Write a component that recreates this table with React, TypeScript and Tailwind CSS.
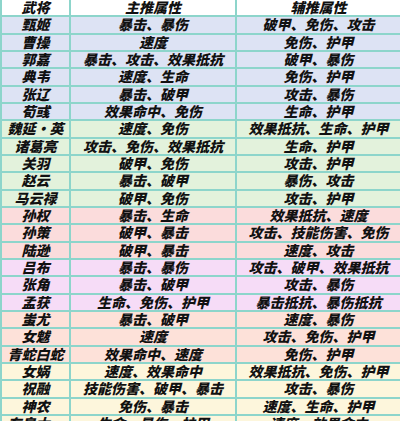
const rows: { name: string; main: string; sub: string; bg: string }[] = [
  { name: '甄姬', main: '暴击、暴伤', sub: '破甲、免伤、攻击', bg: 'bg-[#dde3f4]' },
  { name: '曹操', main: '速度', sub: '免伤、护甲', bg: 'bg-[#dde3f4]' },
  { name: '郭嘉', main: '暴击、攻击、效果抵抗', sub: '破甲、暴伤', bg: 'bg-[#dde3f4]' },
  { name: '典韦', main: '速度、生命', sub: '免伤、护甲', bg: 'bg-[#dde3f4]' },
  { name: '张辽', main: '暴击、破甲', sub: '攻击、暴伤', bg: 'bg-[#dde3f4]' },
  { name: '荀彧', main: '效果命中、免伤', sub: '生命、护甲', bg: 'bg-[#dde3f4]' },
  { name: '魏延·英', main: '速度、免伤', sub: '效果抵抗、生命、护甲', bg: 'bg-[#e3f2dc]' },
  { name: '诸葛亮', main: '攻击、免伤、效果抵抗', sub: '生命、护甲', bg: 'bg-[#e3f2dc]' },
  { name: '关羽', main: '破甲、免伤', sub: '攻击、护甲', bg: 'bg-[#e3f2dc]' },
  { name: '赵云', main: '暴击、破甲', sub: '暴伤、攻击', bg: 'bg-[#e3f2dc]' },
  { name: '马云禄', main: '破甲、免伤', sub: '攻击、护甲', bg: 'bg-[#e3f2dc]' },
  { name: '孙权', main: '暴击、生命', sub: '效果抵抗、速度', bg: 'bg-[#fbdcdc]' },
  { name: '孙策', main: '破甲、暴击', sub: '攻击、技能伤害、免伤', bg: 'bg-[#fbdcdc]' },
  { name: '陆逊', main: '破甲、暴击', sub: '速度、攻击', bg: 'bg-[#fbdcdc]' },
  { name: '吕布', main: '暴击、暴伤', sub: '攻击、破甲、效果抵抗', bg: 'bg-[#f6dcf7]' },
  { name: '张角', main: '暴击、破甲', sub: '攻击、暴伤', bg: 'bg-[#f6dcf7]' },
  { name: '孟获', main: '生命、免伤、护甲', sub: '暴击抵抗、暴伤抵抗', bg: 'bg-[#f6dcf7]' },
  { name: '蚩尤', main: '暴击、破甲', sub: '速度、暴伤', bg: 'bg-[#fde1d9]' },
  { name: '女魃', main: '速度', sub: '攻击、免伤、护甲', bg: 'bg-[#fde1d9]' },
  { name: '青蛇白蛇', main: '效果命中、速度', sub: '免伤、护甲', bg: 'bg-[#fde1d9]' },
  { name: '女娲', main: '速度、效果命中', sub: '效果抵抗、免伤、护甲', bg: 'bg-[#fdf6dc]' },
  { name: '祝融', main: '技能伤害、破甲、暴击', sub: '攻击、暴伤', bg: 'bg-[#fdf6dc]' },
  { name: '神农', main: '免伤、暴击', sub: '速度、生命、护甲', bg: 'bg-[#fdf6dc]' },
  { name: '东皇太一', main: '生命、暴伤、护甲', sub: '速度、效果命中', bg: 'bg-[#fdf6dc]' },
];

const Row = ({ name, main, sub, bg }: { name: string; main: string; sub: string; bg: string }) => (
  <div className={`grid grid-cols-[69px_166px_1fr] h-[17.33px] border-b-2 border-[#8dd5cb] ${bg}`}>
    <div className="flex items-center justify-center border-r-2 border-[#8dd5cb] whitespace-nowrap">{name}</div>
    <div className="flex items-center justify-center border-r-2 border-[#8dd5cb] whitespace-nowrap">{main}</div>
    <div className="flex items-center justify-center whitespace-nowrap">{sub}</div>
  </div>
);

export default function App() {
  return (
    <div
      className="w-[400px] h-[421px] overflow-hidden bg-white border-l-2 border-[#8dd5cb] text-[14px] leading-[15px] font-black italic text-[#111]"
      style={{ fontFamily: '"Noto Sans CJK SC", "Noto Sans", sans-serif' }}
    >
      <Row name="武将" main="主推属性" sub="辅推属性" bg="bg-white" />
      {rows.map((r) => (
        <Row key={r.name} {...r} />
      ))}
    </div>
  );
}
